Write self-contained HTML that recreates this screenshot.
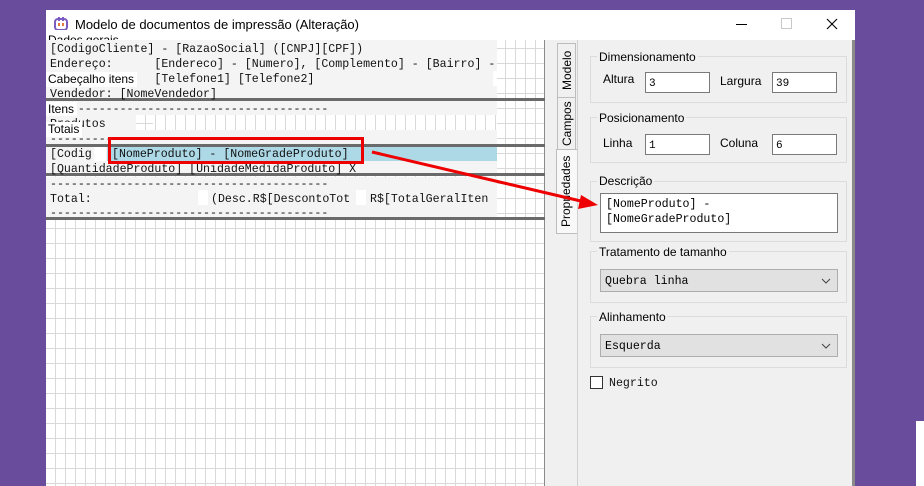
<!DOCTYPE html>
<html><head><meta charset="utf-8"><style>
*{margin:0;padding:0;box-sizing:border-box}
body{width:924px;height:486px;overflow:hidden;background:#694c9b;font-family:"Liberation Sans",sans-serif;position:relative}
.a{position:absolute}
.win{left:46px;top:10px;width:809px;height:476px;background:#f0f0f0}
.title{left:46px;top:10px;width:809px;height:30px;background:#fff;font-size:13px;color:#000}
.grid{left:46px;top:40px;width:499px;height:446px;background-color:#fff;
background-image:linear-gradient(to right,#d9d9d9 1px,transparent 1px),linear-gradient(to bottom,#d9d9d9 1px,transparent 1px);
background-size:10px 15px;background-position:9px 8px;border-right:1px solid #8a8a8a}
.band{background:#f4f4f4;left:46px;width:451px}
.hl{left:46px;width:499px;height:3px;background:#6a6a6a}
.m{font-family:"Liberation Mono",monospace;font-size:11.6px;color:#111;white-space:pre;line-height:15px}
.lbl{background:#fff;font-size:12px;line-height:15px;color:#000;padding:0 3px 0 2px}
.tab{font-size:12px;writing-mode:vertical-rl;transform:rotate(180deg);text-align:center;border:1px solid #bdbdbd;background:#f0f0f0;line-height:18px}
.gb{border:1px solid #dcdcdc;left:590px;width:257px}
.gt{font-size:12px;background:#f0f0f0;padding:0 2px;left:597px}
.lab{font-size:12px}
.inp{background:#fff;border:1px solid #7a7a7a;height:21px;font-family:"Liberation Mono",monospace;font-size:11px;padding:5px 0 0 3px}
.sel{left:600px;width:238px;height:23px;background:#e1e1e1;border:1px solid #adadad;font-family:"Liberation Mono",monospace;font-size:11.6px;padding:5px 0 0 4px}
.sel svg{position:absolute;right:6px;top:8px}
</style></head><body>
<div class="a win"></div>
<div class="a title">
 <svg class="a" style="left:8px;top:7px" width="14" height="14" viewBox="0 0 14 14"><rect x="1" y="2" width="12" height="11" rx="3" fill="none" stroke="#7a5cc0" stroke-width="2"/><rect x="4" y="0" width="2" height="4" fill="#7a5cc0"/><rect x="8" y="0" width="2" height="4" fill="#7a5cc0"/><rect x="4" y="6" width="2" height="3" fill="#e07a40"/><rect x="8" y="6" width="2" height="3" fill="#e07a40"/></svg>
 <div class="a" style="left:29px;top:7px">Modelo de documentos de impressão (Alteração)</div>
 <div class="a" style="left:690px;top:14px;width:11px;height:1px;background:#000"></div>
 <div class="a" style="left:735px;top:8px;width:11px;height:11px;border:1px solid #c8c8c8"></div>
 <svg class="a" style="left:780px;top:8px" width="12" height="12"><path d="M1 1L11 11M11 1L1 11" stroke="#000" stroke-width="1.1"/></svg>
</div>
<div class="a grid"></div>
<div class="a band" style="top:40px;height:58px"></div>
<div class="a band" style="top:101px;height:14px"></div>
<div class="a band" style="top:115px;height:30px;width:90px"></div>
<div class="a band" style="top:130px;height:15px"></div>
<div class="a band" style="top:146px;height:28px"></div>
<div class="a" style="left:107px;top:146px;width:390px;height:15px;background:#add8e6"></div>
<div class="a band" style="top:177px;height:41px"></div>
<div class="a" style="left:153px;top:115px;width:344px;height:15px;background-image:linear-gradient(to right,#d9d9d9 1px,transparent 1px);background-size:10px 15px;background-position:2px 0;background-color:#fff"></div>
<div class="a" style="left:198px;top:190px;width:10px;height:15px;background:#fff"></div>
<div class="a" style="left:356px;top:190px;width:10px;height:15px;background:#fff"></div>
<div class="a" style="left:493px;top:71px;width:4px;height:15px;background:#fff"></div>
<div class="a" style="left:94px;top:146px;width:12px;height:15px;background:#fff"></div>
<div class="a hl" style="top:98px"></div>
<div class="a hl" style="top:144px"></div>
<div class="a hl" style="top:173px"></div>
<div class="a hl" style="top:217px"></div>
<div class="a" style="left:545px;top:40px;width:11px;height:446px;background:#f0f0f0"></div>

<div class="a m" style="left:50px;top:42px">[CodigoCliente] - [RazaoSocial] ([CNPJ][CPF])</div>
<div class="a m" style="left:50px;top:57px">Endereço:      [Endereco] - [Numero], [Complemento] - [Bairro] -</div>
<div class="a m" style="left:50px;top:72px">               [Telefone1] [Telefone2]</div>
<div class="a m" style="left:50px;top:87px">Vendedor: [NomeVendedor]</div>
<div class="a m" style="left:50px;top:102px">----------------------------------------</div>
<div class="a m" style="left:50px;top:117px">Produtos</div>
<div class="a m" style="left:50px;top:132px">----------</div>
<div class="a m" style="left:50px;top:147px">[Codig</div>
<div class="a m" style="left:112px;top:147px">[NomeProduto] - [NomeGradeProduto]</div>
<div class="a m" style="left:50px;top:162px">[QuantidadeProduto] [UnidadeMedidaProduto] X</div>
<div class="a m" style="left:50px;top:177px">----------------------------------------</div>
<div class="a m" style="left:50px;top:192px">Total:</div>
<div class="a m" style="left:211px;top:192px">(Desc.R$[DescontoTot</div>
<div class="a m" style="left:370px;top:192px">R$[TotalGeralIten</div>
<div class="a m" style="left:50px;top:206px">----------------------------------------</div>

<div class="a lbl" style="left:46px;top:30px;height:10px;overflow:hidden;line-height:20px">Dados gerais</div>
<div class="a lbl" style="left:46px;top:72px">Cabeçalho itens</div>
<div class="a lbl" style="left:46px;top:102px;height:14px">Itens</div>
<div class="a lbl" style="left:46px;top:122px">Totais</div>

<div class="a tab" style="left:557px;top:43px;width:19px;height:55px">Modelo</div>
<div class="a tab" style="left:557px;top:97px;width:19px;height:54px">Campos</div>
<div class="a tab" style="left:556px;top:149px;width:22px;height:85px;background:#f8f8f8">Propriedades</div>
<div class="a" style="left:577px;top:40px;width:1px;height:446px;background:#d0d0d0"></div>
<div class="a" style="left:852px;top:40px;width:3px;height:446px;background:#8a8a8a"></div>

<div class="a gb" style="top:56px;height:47px"></div><div class="a gt" style="top:50px;font-size:12px">Dimensionamento</div>
<div class="a lab" style="left:603px;top:72px">Altura</div><div class="a inp" style="left:645px;top:72px;width:65px">3</div>
<div class="a lab" style="left:720px;top:74px">Largura</div><div class="a inp" style="left:772px;top:72px;width:65px">39</div>
<div class="a gb" style="top:117px;height:46px"></div><div class="a gt" style="top:111px">Posicionamento</div>
<div class="a lab" style="left:603px;top:136px">Linha</div><div class="a inp" style="left:645px;top:134px;width:65px">1</div>
<div class="a lab" style="left:720px;top:136px">Coluna</div><div class="a inp" style="left:772px;top:134px;width:65px">6</div>
<div class="a gb" style="top:181px;height:61px"></div><div class="a gt" style="top:174px">Descrição</div>
<div class="a inp" style="left:600px;top:193px;width:238px;height:40px;font-size:11.6px;line-height:15px;padding:3px 0 0 5px">[NomeProduto] -<br>[NomeGradeProduto]</div>
<div class="a gb" style="top:251px;height:52px"></div><div class="a gt" style="top:245px">Tratamento de tamanho</div>
<div class="a sel" style="top:269px">Quebra linha<svg width="10" height="6"><path d="M1 1L5 5L9 1" fill="none" stroke="#444"/></svg></div>
<div class="a gb" style="top:316px;height:52px"></div><div class="a gt" style="top:310px">Alinhamento</div>
<div class="a sel" style="top:334px">Esquerda<svg width="10" height="6"><path d="M1 1L5 5L9 1" fill="none" stroke="#444"/></svg></div>
<div class="a" style="left:590px;top:376px;width:13px;height:13px;border:1px solid #333;background:#fff"></div>
<div class="a m" style="left:609px;top:376px">Negrito</div>

<div class="a" style="left:916px;top:421px;width:8px;height:65px;background:#fff"></div>

<svg class="a" style="left:0;top:0" width="924" height="486">
<rect x="109.5" y="138.5" width="253" height="24" fill="none" stroke="#e00" stroke-width="3"/>
<line x1="372" y1="152" x2="585" y2="202" stroke="#e00" stroke-width="3"/>
<path d="M598 205L581 195L578 209Z" fill="#e00"/>
</svg>
</body></html>
